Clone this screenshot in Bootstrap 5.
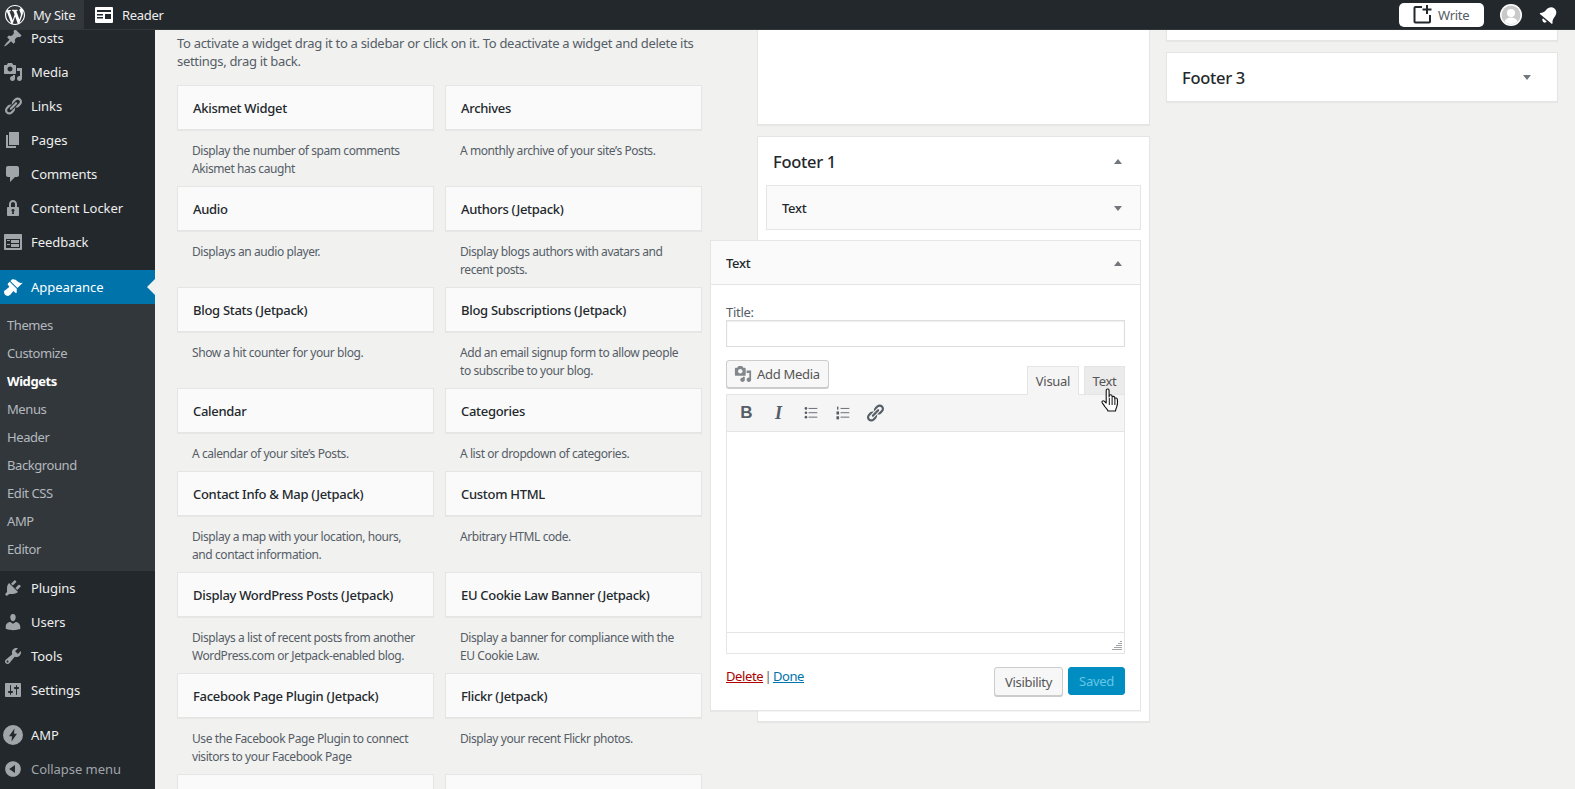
<!DOCTYPE html>
<html lang="en">
<head>
<meta charset="utf-8">
<title>Widgets</title>
<link rel="stylesheet" href="https://cdn.jsdelivr.net/npm/bootstrap@5.3.0/dist/css/bootstrap.min.css">
<style>
html,body{height:789px;overflow:hidden}
body{background:#f1f1f0;color:#555d66;font-family:"Noto Sans","Open Sans",sans-serif;font-size:13px;line-height:18px;letter-spacing:-.3px}
.wtop{position:fixed;top:0;left:0;right:0;height:30px;background:#23282d;z-index:50;padding:0;border-bottom:1px solid #32373c;color:#eee;flex-wrap:nowrap}
.wsite{height:29px;width:84px;background:#32373c;padding-left:5px;gap:8px}
.wreader{padding-left:11px;gap:9px;height:29px}
.wwrite{width:85px;height:24px;background:#fff;border-radius:5px;margin-right:16px;gap:6px;color:#555d66;padding-left:14px}
.wright{margin-left:auto;gap:0}
.wavatar{margin-right:17px}
.wshell{height:789px}
.wside{width:155px;flex:0 0 155px;background:#23282d;padding-top:21px;height:789px;color:#eee}
.witem{height:34px;padding-left:3px;gap:8px;color:#eee;white-space:nowrap;letter-spacing:-.05px}
.witem svg{width:20px;height:20px;fill:#a0a5aa;flex:none}
.wgap{height:11px}
.wactive{background:#0073aa;color:#fff;position:relative}
.wactive svg{fill:#fff}
.wactive::after{content:"";position:absolute;right:0;top:9px;border:8px solid transparent;border-right-color:#f1f1f0;border-left:0}
.wsub{background:#32373c;padding:6.5px 0 7.5px 7px;height:267px;letter-spacing:-.42px}
.wsub div{height:28px;line-height:28px;color:#b4b9be}
.wsub .wcur{color:#fff;font-weight:700}
.wcollapse{color:#a0a5aa}
.wmain{padding-left:22px;gap:0;align-items:flex-start}
.wleft{width:525px;flex:none;padding-top:34px;margin-right:55px}
.wleft p{margin:0 0 15px;width:525px}
.wgridbox{display:grid;grid-template-columns:257px 257px;column-gap:11px}
.wtile{background:#fafafa;border:1px solid #e5e5e5;box-shadow:0 1px 1px rgba(0,0,0,.04);height:45px;padding:0 15px;color:#23282d;font-weight:500;white-space:nowrap}
.wdesc{margin:12px 0 8px;padding:0 15px;min-height:18px;font-size:12px;letter-spacing:-.42px}
.wcolm{width:393px;flex:none;margin-right:16px}
.wcolr{width:392px;flex:none}
.wbox{background:#fff;border:1px solid #e5e5e5;box-shadow:0 1px 1px rgba(0,0,0,.04)}
.wtopbox1{height:125px}
.wtopbox2{height:41px}
.wfooter1{height:586.5px;margin-top:10.5px;position:relative}
.wfooter3{height:50px;margin-top:10.5px;padding:2px 26px 0 15px}
.wfhead{height:48px;padding:2px 27px 0 15px;color:#23282d;font-size:16.5px;font-weight:500}
.wfoot3t{color:#23282d;font-size:16.5px;font-weight:500}
.wup,.wdown{width:0;height:0;border-left:4px solid transparent;border-right:4px solid transparent;flex:none}
.wup{border-bottom:5.5px solid #72777c}
.wdown{border-top:5.5px solid #72777c}
.winner{margin:0 7px 0 8px;width:375px;height:45.5px;background:#fafafa;border:1px solid #e5e5e5;padding:2px 18px 0 15px;color:#23282d;font-weight:500}
.wopen{position:absolute;left:-48px;top:103px;width:431px;height:471px;background:#fff;border:1px solid #e5e5e5;box-shadow:0 1px 1px rgba(0,0,0,.04);z-index:5}
.wohead{height:44.5px;background:#fafafa;border-bottom:1px solid #e5e5e5;padding:2px 18px 0 15px;color:#23282d;font-weight:500}
.wobody{padding:18px 15px 0}
.wlabel{display:block;height:17px;margin-bottom:0;color:#555d66}
.wtitle{height:27px;border:1px solid #ddd;border-radius:0;box-shadow:inset 0 1px 2px rgba(0,0,0,.07);padding:0 6px;font-size:13px;display:block;min-height:0}
.wedbar{margin-top:13px;height:34px;align-items:flex-start}
.wbtn{font-size:13px;letter-spacing:-.3px;line-height:18px;color:#555;background:#f7f7f7;border:1px solid #ccc;box-shadow:0 1px 0 #ccc;border-radius:3px;padding:0;--bs-btn-padding-y:0}
.wmedia{width:103px;height:28px;gap:5px;padding-left:7px;display:flex;align-items:center}
.wmedia svg{width:18px;height:18px;fill:#82878c;flex:none}
.wtabs{margin-left:auto;gap:5px;padding-top:6px}
.wtab{height:28px;border:1px solid #e5e5e5;border-bottom:0;display:flex;align-items:center;justify-content:center;color:#555}
.wvis{width:52px;background:#f5f5f5;height:29px;position:relative;z-index:1}
.wtxt{width:41px;background:#ebebeb}
.wedit{border:1px solid #e5e5e5;height:260px;background:#fff}
.wbar{height:37px;background:#f5f5f5;border-bottom:1px solid #e5e5e5;padding-left:3.5px;gap:0}
.wtool{width:32px;height:30px;color:#555d66;flex:none}
.wtool svg{width:20px;height:20px;fill:#555d66}
.wtool .wlist{width:17.500px;height:17.500px}
.wbold{font:700 17px "Liberation Sans",sans-serif;letter-spacing:0}
.wital{font:italic 700 18px "Liberation Serif",serif;letter-spacing:0}
.warea{height:201px;border-bottom:1px solid #e5e5e5}
.wstat{height:20px;padding:0 2px 2px 0}
.wacts{margin-top:13px}
.wlinks{word-spacing:-1.5px;letter-spacing:-.4px}
.wacts a{text-decoration:underline}
.wdel{color:#a00}
.wdone{color:#0073aa}
.wvisb{width:69px;height:29px;padding-top:1px}
.wsaved{width:57px;height:28px;margin-left:5px;background:#008ec2;border:1px solid #008ec2;border-radius:3px;color:#66c6e4;--bs-btn-padding-y:0;padding:1px 0 0;font-size:13px;letter-spacing:-.3px;display:flex;align-items:center;justify-content:center}
.wtoolsrow{display:flex;align-items:flex-start}
.wcursor{position:absolute;left:390px;top:147px;width:19px;height:25px;z-index:10}
</style>
</head>
<body>
<nav class="navbar wtop d-flex align-items-center justify-content-start">
  <div class="wsite d-flex align-items-center">
    <svg width="20" height="20" viewBox="0 0 20 20" fill="#fff"><path d="M20 10c0-5.51-4.49-10-10-10C4.48 0 0 4.49 0 10c0 5.52 4.48 10 10 10 5.51 0 10-4.48 10-10zM7.78 15.37L4.37 6.22c.55-.02 1.17-.08 1.17-.08.5-.06.44-1.13-.06-1.11 0 0-1.45.11-2.37.11-.18 0-.37 0-.58-.01C4.12 2.69 6.87 1.11 10 1.11c2.33 0 4.45.87 6.05 2.34-.68-.11-1.65.39-1.65 1.58 0 .74.45 1.36.9 2.1.35.61.55 1.36.55 2.46 0 1.49-1.4 5-1.4 5l-3.03-8.37c.54-.02.82-.17.82-.17.5-.05.44-1.25-.06-1.22 0 0-1.44.12-2.38.12-.87 0-2.33-.12-2.33-.12-.5-.03-.56 1.2-.06 1.22l.92.08 1.26 3.41zM17.41 10c.24-.64.74-1.87.43-4.25.7 1.29 1.05 2.71 1.05 4.25 0 3.29-1.73 6.24-4.4 7.78.97-2.59 1.94-5.2 2.92-7.78zM6.1 18.09C3.12 16.65 1.11 13.53 1.11 10c0-1.3.23-2.48.72-3.59C3.25 10.3 4.67 14.2 6.1 18.09zm4.03-6.63l2.58 6.98c-.86.29-1.76.45-2.71.45-.79 0-1.57-.11-2.29-.33.81-2.38 1.62-4.74 2.42-7.1z"/></svg>
    <span>My Site</span>
  </div>
  <div class="wreader d-flex align-items-center">
    <svg width="18" height="16" viewBox="0 0 18 16"><path fill="#fff" fill-rule="evenodd" d="M1 0h16a1 1 0 0 1 1 1v14a1 1 0 0 1-1 1H1a1 1 0 0 1-1-1V1a1 1 0 0 1 1-1zM2 3v2h14V3zM2 7v1.500h6V7zM2 10v1.500h6V10zM10 7v5h6V7z"/></svg>
    <span>Reader</span>
  </div>
  <div class="wright d-flex align-items-center">
    <div class="wwrite d-flex align-items-center">
      <svg width="19" height="19" viewBox="0 0 19 19" fill="none" stroke="#23282d" stroke-width="2"><path d="M9 2H2.500a1 1 0 0 0-1 1v13.500a1 1 0 0 0 1 1H16a1 1 0 0 0 1-1V10"/><path d="M14 0v9M9.500 4.500h9"/></svg>
      <span>Write</span>
    </div>
    <svg class="wavatar" width="22" height="22" viewBox="0 0 22 22"><circle cx="11" cy="11" r="11" fill="#fff"/><circle cx="11" cy="11" r="9.500" fill="#c9c9c9"/><circle cx="11" cy="9" r="4" fill="#fff"/><path fill="#fff" d="M4.500 17.500c1-3 4-4 6.500-4s5.500 1 6.500 4a9.500 9.500 0 0 1-13 0z"/></svg>
    <svg class="me-3" width="20" height="20" viewBox="0 0 20 20" fill="#fff"><g transform="rotate(40 10 10)"><path d="M10 1.500c3.500 0 5.500 3 5.500 6.500 0 3 1 4.500 2.500 6v1H2v-1c1.500-1.500 2.500-3 2.500-6 0-3.500 2-6.500 5.500-6.500z"/><path d="M7.500 16.500h5a2.500 2.500 0 0 1-5 0z"/></g></svg>
  </div>
</nav>

<div class="wshell d-flex">
  <aside class="wside d-flex flex-column nav">
    <div class="witem d-flex align-items-center"><svg viewBox="0 0 20 20"><path d="M10.440 3.020l1.820-1.820 6.360 6.350-1.830 1.820c-1.050-.68-2.480-.57-3.410.36l-.75.75c-.92.93-1.040 2.350-.35 3.410l-1.830 1.820-2.410-2.410-2.800 2.790c-.42.42-3.380 2.710-3.800 2.290s1.860-3.390 2.280-3.810l2.790-2.790L4.100 9.360l1.830-1.820c1.050.69 2.480.57 3.400-.36l.75-.75c.93-.92 1.050-2.350.36-3.410z"/></svg><span>Posts</span></div>
    <div class="witem d-flex align-items-center"><svg viewBox="0 0 20 20"><path d="M13 11V4c0-.55-.45-1-1-1h-1.670L9 1H5L3.670 3H2c-.55 0-1 .45-1 1v7c0 .55.45 1 1 1h10c.55 0 1-.45 1-1zM7 4.500c1.380 0 2.500 1.120 2.500 2.500S8.380 9.500 7 9.500 4.500 8.380 4.500 7 5.620 4.500 7 4.500zM14 6h5v10.500c0 1.380-1.120 2.500-2.500 2.500S14 17.880 14 16.500s1.120-2.500 2.500-2.500c.17 0 .34.020.5.050V9h-3V6zm-4 8.050V13h2v3.500c0 1.380-1.120 2.500-2.500 2.500S7 17.880 7 16.500 8.120 14 9.500 14c.17 0 .34.020.5.050z"/></svg><span>Media</span></div>
    <div class="witem d-flex align-items-center"><svg viewBox="0 0 20 20"><path d="M17.740 2.760c1.680 1.690 1.680 4.410 0 6.100l-1.530 1.520c-1.120 1.120-2.700 1.470-4.140 1.090l2.620-2.610.76-.77.76-.76c.84-.84.84-2.200 0-3.040-.84-.85-2.200-.85-3.040 0l-.77.76-3.380 3.380c-.37-1.440-.02-3.020 1.100-4.140l1.520-1.530c1.690-1.680 4.420-1.680 6.100 0zM8.590 13.430l5.340-5.340c.42-.42.42-1.100 0-1.520-.44-.43-1.130-.39-1.530 0l-5.330 5.340c-.42.42-.42 1.100 0 1.520.44.43 1.130.39 1.520 0zm-.76 2.290l4.140-4.150c.38 1.440.03 3.020-1.090 4.140l-1.520 1.530c-1.690 1.680-4.410 1.680-6.100 0-1.680-1.680-1.680-4.420 0-6.100l1.530-1.520c1.120-1.120 2.700-1.470 4.140-1.100l-4.140 4.150c-.85.84-.85 2.200 0 3.050.84.84 2.200.84 3.040 0z"/></svg><span>Links</span></div>
    <div class="witem d-flex align-items-center"><svg viewBox="0 0 20 20"><path d="M6 15V2h10v13H6zm-1 1h8v2H3V5h2v11z"/></svg><span>Pages</span></div>
    <div class="witem d-flex align-items-center"><svg viewBox="0 0 20 20"><path d="M5 2h9c1.100 0 2 .9 2 2v7c0 1.100-.9 2-2 2h-2l-5 5v-5H5c-1.100 0-2-.9-2-2V4c0-1.100.9-2 2-2z"/></svg><span>Comments</span></div>
    <div class="witem d-flex align-items-center"><svg viewBox="0 0 20 20"><path d="M14 9h1c.55 0 1 .45 1 1v7c0 .55-.45 1-1 1H5c-.55 0-1-.45-1-1v-7c0-.55.45-1 1-1h1V6c0-2.210 1.790-4 4-4s4 1.790 4 4v3zm-2 0V6c0-1.100-.9-2-2-2s-2 .9-2 2v3h4zm-1 7l-.36-2.150c.51-.24.86-.75.86-1.350 0-.83-.67-1.500-1.500-1.500s-1.500.67-1.500 1.500c0 .6.35 1.110.86 1.350L9 16h2z"/></svg><span>Content Locker</span></div>
    <div class="witem d-flex align-items-center"><svg viewBox="0 0 20 20"><path d="M2 2h16c.55 0 1 .45 1 1v14c0 .55-.45 1-1 1H2c-.55 0-1-.45-1-1V3c0-.55.45-1 1-1zm15 14V7H3v9h14zM4 8v1h3V8H4zm4 0v3h8V8H8zm-4 4v1h3v-1H4zm4 0v3h8v-3H8z"/></svg><span>Feedback</span></div>
    <div class="wgap"></div>
    <div class="witem wactive d-flex align-items-center"><svg viewBox="0 0 20 20"><path d="M14.480 11.060L7.410 3.990l1.500-1.500c.5-.56 2.300-.47 3.510.32 1.210.8 1.430 1.280 2.910 2.100 1.180.64 2.450 1.260 4.450.85zm-.71.71L6.700 4.700 4.930 6.470c-.39.39-.39 1.020 0 1.410l1.060 1.060c.39.39.39 1.030 0 1.420-.6.6-1.430 1.110-2.210 1.690-.35.26-.7.53-1.010.84C1.430 13.230 1 14 1 15c0 1.710 1.290 4 4 4 .73 0 1.530-.39 2.280-1.140.31-.31.58-.66.84-1.010.58-.78 1.090-1.610 1.690-2.210.39-.39 1.030-.39 1.420 0l1.060 1.060c.39.39 1.020.39 1.410 0z"/></svg><span>Appearance</span></div>
    <div class="wsub">
      <div>Themes</div><div>Customize</div><div class="wcur">Widgets</div><div>Menus</div><div>Header</div><div>Background</div><div>Edit CSS</div><div>AMP</div><div>Editor</div>
    </div>
    <div class="witem d-flex align-items-center"><svg viewBox="0 0 20 20"><path d="M13.110 4.360L9.870 7.600 8 5.730l3.240-3.240c.35-.34 1.050-.2 1.560.32.52.51.66 1.210.31 1.550zm-8 1.770l.91-1.120 9.010 9.010-1.190.84c-.71.71-2.630 1.160-3.820 1.160H6.140L4.900 17.260c-.59.59-1.540.59-2.120 0-.59-.58-.59-1.530 0-2.120l1.240-1.240v-3.880c0-1.130.4-3.190 1.090-3.890zm7.260 3.970l3.240-3.240c.34-.35 1.040-.21 1.550.31.52.51.66 1.210.31 1.550l-3.240 3.250z"/></svg><span>Plugins</span></div>
    <div class="witem d-flex align-items-center"><svg viewBox="0 0 20 20"><path d="M10 9.250c-2.270 0-2.730-3.440-2.730-3.440C7 4.020 7.820 2 9.970 2c2.160 0 2.980 2.020 2.710 3.810 0 0-.41 3.440-2.680 3.440zm0 2.570L12.720 10c2.390 0 4.520 2.330 4.520 4.530v2.490s-3.650 1.130-7.240 1.130c-3.650 0-7.240-1.130-7.240-1.130v-2.490c0-2.250 1.940-4.480 4.470-4.480z"/></svg><span>Users</span></div>
    <div class="witem d-flex align-items-center"><svg viewBox="0 0 20 20"><path d="M16.680 9.770c-1.340 1.340-3.300 1.670-4.950.99l-5.410 6.520c-.99.99-2.590.99-3.580 0s-.99-2.590 0-3.570l6.520-5.420c-.68-1.650-.35-3.610.99-4.950 1.280-1.280 3.120-1.620 4.720-1.060l-2.890 2.890 2.820 2.820 2.860-2.870c.53 1.580.18 3.390-1.080 4.650zM3.810 16.210c.4.39 1.040.39 1.430 0 .4-.4.4-1.040 0-1.430-.39-.4-1.030-.4-1.430 0-.39.39-.39 1.030 0 1.430z"/></svg><span>Tools</span></div>
    <div class="witem d-flex align-items-center"><svg viewBox="0 0 20 20"><path d="M18 16V4c0-.55-.45-1-1-1H3c-.55 0-1 .45-1 1v12c0 .55.45 1 1 1h14c.55 0 1-.45 1-1zM8 11h1c.55 0 1 .45 1 1s-.45 1-1 1H8v1.500c0 .28-.22.5-.5.5s-.5-.22-.5-.5V13H6c-.55 0-1-.45-1-1s.45-1 1-1h1V5.500c0-.28.22-.5.5-.5s.5.22.5.5V11zm5-2h-1c-.55 0-1-.45-1-1s.45-1 1-1h1V5.500c0-.28.22-.5.5-.5s.5.22.5.5V7h1c.55 0 1 .45 1 1s-.45 1-1 1h-1v5.500c0 .28-.22.5-.5.5s-.5-.22-.5-.5V9z"/></svg><span>Settings</span></div>
    <div class="wgap"></div>
    <div class="witem d-flex align-items-center"><svg viewBox="0 0 20 20"><path fill-rule="evenodd" d="M10 0a10 10 0 1 1 0 20a10 10 0 0 1 0-20zM11.500 3.500L6 11.200h3L8.500 16.500 14 8.800h-3z"/></svg><span>AMP</span></div>
    <div class="witem wcollapse d-flex align-items-center"><svg viewBox="0 0 20 20"><path d="M10 2.160c4.330 0 7.840 3.510 7.840 7.840s-3.510 7.840-7.840 7.840S2.160 14.330 2.160 10 5.710 2.160 10 2.160zm2 11.720V6.120L6.180 9.970z"/></svg><span>Collapse menu</span></div>
  </aside>

  <main class="wmain d-flex flex-grow-1">
    <section class="wleft">
      <p>To activate a widget drag it to a sidebar or click on it. To deactivate a widget and delete its settings, drag it back.</p>
      <div class="wgridbox">
        <div><div class="wtile d-flex align-items-center">Akismet Widget</div><div class="wdesc">Display the number of spam comments Akismet has caught</div></div>
        <div><div class="wtile d-flex align-items-center">Archives</div><div class="wdesc">A monthly archive of your site’s Posts.</div></div>
        <div><div class="wtile d-flex align-items-center">Audio</div><div class="wdesc">Displays an audio player.</div></div>
        <div><div class="wtile d-flex align-items-center">Authors (Jetpack)</div><div class="wdesc">Display blogs authors with avatars and recent posts.</div></div>
        <div><div class="wtile d-flex align-items-center">Blog Stats (Jetpack)</div><div class="wdesc">Show a hit counter for your blog.</div></div>
        <div><div class="wtile d-flex align-items-center">Blog Subscriptions (Jetpack)</div><div class="wdesc">Add an email signup form to allow people to subscribe to your blog.</div></div>
        <div><div class="wtile d-flex align-items-center">Calendar</div><div class="wdesc">A calendar of your site’s Posts.</div></div>
        <div><div class="wtile d-flex align-items-center">Categories</div><div class="wdesc">A list or dropdown of categories.</div></div>
        <div><div class="wtile d-flex align-items-center">Contact Info &amp; Map (Jetpack)</div><div class="wdesc">Display a map with your location, hours, and contact information.</div></div>
        <div><div class="wtile d-flex align-items-center">Custom HTML</div><div class="wdesc">Arbitrary HTML code.</div></div>
        <div><div class="wtile d-flex align-items-center">Display WordPress Posts (Jetpack)</div><div class="wdesc">Displays a list of recent posts from another WordPress.com or Jetpack-enabled blog.</div></div>
        <div><div class="wtile d-flex align-items-center">EU Cookie Law Banner (Jetpack)</div><div class="wdesc">Display a banner for compliance with the EU Cookie Law.</div></div>
        <div><div class="wtile d-flex align-items-center">Facebook Page Plugin (Jetpack)</div><div class="wdesc">Use the Facebook Page Plugin to connect visitors to your Facebook Page</div></div>
        <div><div class="wtile d-flex align-items-center">Flickr (Jetpack)</div><div class="wdesc">Display your recent Flickr photos.</div></div>
        <div><div class="wtile"></div></div>
        <div><div class="wtile"></div></div>
      </div>
    </section>

    <section class="wcolm">
      <div class="wbox wtopbox1"></div>
      <div class="wbox wfooter1">
        <div class="wfhead d-flex align-items-center justify-content-between"><span>Footer 1</span><i class="wup"></i></div>
        <div class="winner d-flex align-items-center justify-content-between"><span>Text</span><i class="wdown"></i></div>
        <div class="wopen">
          <div class="wohead d-flex align-items-center justify-content-between"><span>Text</span><i class="wup"></i></div>
          <div class="wobody">
            <label class="wlabel" for="wt">Title:</label>
            <input id="wt" class="form-control wtitle" type="text">
            <div class="wedbar d-flex">
              <button class="btn wbtn wmedia" type="button"><svg viewBox="0 0 20 20"><path d="M13 11V4c0-.55-.45-1-1-1h-1.670L9 1H5L3.670 3H2c-.55 0-1 .45-1 1v7c0 .55.45 1 1 1h10c.55 0 1-.45 1-1zM7 4.500c1.380 0 2.500 1.120 2.500 2.500S8.380 9.500 7 9.500 4.500 8.380 4.500 7 5.620 4.500 7 4.500zM14 6h5v10.500c0 1.380-1.120 2.500-2.500 2.500S14 17.880 14 16.500s1.120-2.500 2.500-2.500c.17 0 .34.020.5.050V9h-3V6zm-4 8.050V13h2v3.500c0 1.380-1.120 2.500-2.500 2.500S7 17.880 7 16.500 8.120 14 9.500 14c.17 0 .34.020.5.050z"/></svg><span>Add Media</span></button>
              <div class="wtabs d-flex">
                <div class="wtab wvis">Visual</div>
                <div class="wtab wtxt">Text</div>
              </div>
            </div>
            <div class="wedit">
              <div class="wbar d-flex align-items-center">
                <div class="wtool d-flex align-items-center justify-content-center wbold">B</div>
                <div class="wtool d-flex align-items-center justify-content-center wital">I</div>
                <div class="wtool d-flex align-items-center justify-content-center"><svg class="wlist" viewBox="0 0 20 20"><circle cx="4.500" cy="5" r="1.500"/><circle cx="4.500" cy="10" r="1.500"/><circle cx="4.500" cy="15" r="1.500"/><rect x="7.500" y="4.500" width="10" height="1"/><rect x="7.500" y="9.500" width="10" height="1"/><rect x="7.500" y="14.500" width="10" height="1"/></svg></div>
                <div class="wtool d-flex align-items-center justify-content-center"><svg class="wlist" viewBox="0 0 20 20"><rect x="3.500" y="3" width="1.500" height="3.500"/><rect x="2.800" y="8.500" width="3" height="3.500"/><rect x="2.800" y="14" width="3" height="3.500"/><rect x="7.500" y="4.500" width="10" height="1"/><rect x="7.500" y="9.500" width="10" height="1"/><rect x="7.500" y="14.500" width="10" height="1"/></svg></div>
                <div class="wtool d-flex align-items-center justify-content-center"><svg viewBox="0 0 20 20"><path d="M17.740 2.760c1.680 1.690 1.680 4.410 0 6.100l-1.530 1.520c-1.120 1.120-2.700 1.470-4.140 1.090l2.620-2.610.76-.77.76-.76c.84-.84.84-2.200 0-3.040-.84-.85-2.200-.85-3.040 0l-.77.76-3.380 3.380c-.37-1.440-.02-3.020 1.100-4.140l1.520-1.530c1.690-1.680 4.420-1.680 6.100 0zM8.590 13.430l5.340-5.340c.42-.42.42-1.100 0-1.520-.44-.43-1.130-.39-1.530 0l-5.330 5.340c-.42.42-.42 1.100 0 1.520.44.43 1.130.39 1.520 0zm-.76 2.290l4.140-4.150c.38 1.440.03 3.020-1.090 4.140l-1.520 1.530c-1.690 1.680-4.410 1.680-6.100 0-1.680-1.680-1.680-4.420 0-6.100l1.530-1.520c1.120-1.120 2.700-1.470 4.140-1.100l-4.140 4.150c-.85.84-.85 2.200 0 3.050.84.84 2.200.84 3.040 0z"/></svg></div>
              </div>
              <div class="warea"></div>
              <div class="wstat d-flex justify-content-end align-items-end">
                <svg width="10" height="10" viewBox="0 0 10 10" stroke="#a0a5aa" stroke-width="1"><path d="M8 .5h2M6 2.500h4M4 4.500h6M2 6.500h8M0 8.500h10"/></svg>
              </div>
            </div>
            <div class="wacts wtoolsrow justify-content-between">
              <div class="wlinks"><a class="wdel" href="#">Delete</a> | <a class="wdone" href="#">Done</a></div>
              <div class="d-flex"><button class="btn wbtn wvisb" type="button">Visibility</button><button class="btn wsaved" type="button">Saved</button></div>
            </div>
          </div>
          <svg class="wcursor" viewBox="0 0 19 25"><path fill="#fff" stroke="#111" stroke-width="1.100" stroke-linejoin="round" d="M5.500 1.500c.9-1 2.600-.4 2.600 1V9l.2-1.200c.2-1.500 2.500-1.500 2.700 0l.1 1.500c.2-1.300 2.400-1.300 2.600.1l.1 1.300c.3-1.100 2.300-1 2.500.4.300 2 .3 5-.5 7.500-.5 1.700-1.300 3-1.300 4.400H7c-.4-1.500-1.600-2.500-2.800-4-1-1.400-2-3-2.900-4.200-.9-1.300.7-2.600 1.900-1.700L5.200 15V3c0-.6 0-1.100.3-1.500z"/><path stroke="#111" stroke-width="1" d="M8.300 10v7M11.100 10v7M13.900 11v6"/></svg>
        </div>
      </div>
    </section>

    <section class="wcolr">
      <div class="wbox wtopbox2"></div>
      <div class="wbox wfooter3 d-flex align-items-center justify-content-between"><span class="wfoot3t">Footer 3</span><i class="wdown"></i></div>
    </section>
  </main>
</div>
<script src="https://cdn.jsdelivr.net/npm/bootstrap@5.3.0/dist/js/bootstrap.bundle.min.js"></script>
</body>
</html>
